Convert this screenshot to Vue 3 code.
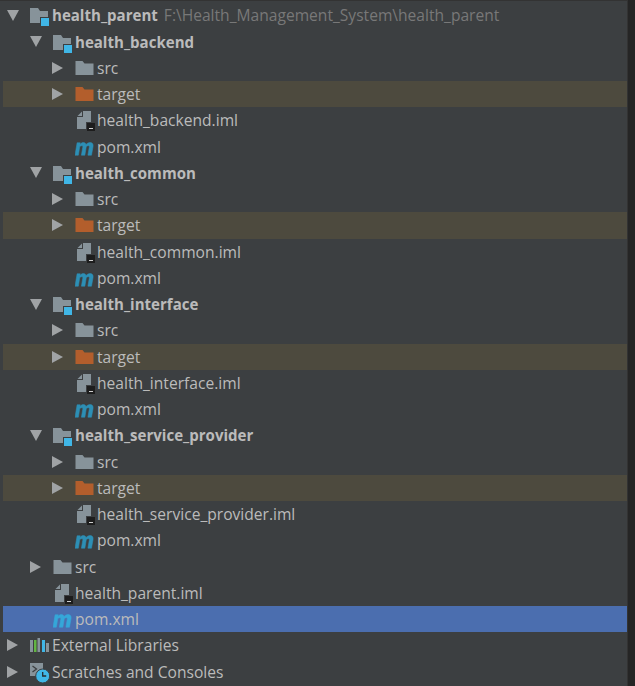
<script setup>
const modules = ['health_backend', 'health_common', 'health_interface', 'health_service_provider']

const rows = [
  { id: 'parent', depth: 0, arrow: 'down', icon: 'module', name: 'health_parent', bold: true, path: 'F:\\Health_Management_System\\health_parent' },
]
for (const m of modules) {
  rows.push({ id: m, depth: 1, arrow: 'down', icon: 'module', name: m, bold: true })
  rows.push({ id: m + '-src', depth: 2, arrow: 'right', icon: 'folder', name: 'src' })
  rows.push({ id: m + '-target', depth: 2, arrow: 'right', icon: 'excluded', name: 'target', excluded: true })
  rows.push({ id: m + '-iml', depth: 2, icon: 'iml', name: m + '.iml' })
  rows.push({ id: m + '-pom', depth: 2, icon: 'maven', name: 'pom.xml' })
}
rows.push({ id: 'src', depth: 1, arrow: 'right', icon: 'folder', name: 'src' })
rows.push({ id: 'iml', depth: 1, icon: 'iml', name: 'health_parent.iml' })
rows.push({ id: 'pom', depth: 1, icon: 'maven', name: 'pom.xml', selected: true })
rows.push({ id: 'libs', depth: 0, arrow: 'right', icon: 'libs', name: 'External Libraries' })
rows.push({ id: 'scratch', depth: 0, arrow: 'right', icon: 'scratch', name: 'Scratches and Consoles' })
</script>

<template>
  <div class="panel">
    <div class="tree">
      <div
        v-for="r in rows"
        :key="r.id"
        class="row"
        :class="[`depth-${r.depth}`, { excluded: r.excluded, selected: r.selected }]"
      >
        <span class="arrow">
          <svg v-if="r.arrow === 'down'" width="12" height="11" viewBox="0 0 12 11"><polygon points="0,0 12,0 6,11" fill="#a0a3a5" /></svg>
          <svg v-else-if="r.arrow === 'right'" width="11" height="12" viewBox="0 0 11 12"><polygon points="0,0 11,6 0,12" fill="#a0a3a5" /></svg>
        </span>
        <span class="icon">
          <svg v-if="r.icon === 'module'" width="20" height="22" viewBox="0 0 20 22">
            <path d="M0 4h8l2 3h8v12H0z" fill="#87939a" />
            <rect x="10" y="13" width="10" height="9" fill="#3c3f41" />
            <rect x="11" y="14" width="8" height="8" fill="#40b6e6" />
          </svg>
          <svg v-else-if="r.icon === 'folder'" width="20" height="20" viewBox="0 0 20 20">
            <path d="M0.500 3h7l2 2.500h9V17H0.500z" fill="#87939a" />
          </svg>
          <svg v-else-if="r.icon === 'excluded'" width="20" height="20" viewBox="0 0 20 20">
            <path d="M0.500 3h7l2 2.500h9V17H0.500z" fill="#b35e2c" />
          </svg>
          <svg v-else-if="r.icon === 'iml'" width="22" height="24" viewBox="0 0 22 24">
            <path d="M8 3h8v18H2V9h6z" fill="#87939a" />
            <path d="M7 3.500V8H2.500z" fill="#87939a" />
            <rect x="11" y="14" width="10" height="10" fill="#3c3f41" />
            <rect x="12" y="15" width="8" height="8" fill="#1d1d1d" />
            <rect x="14" y="20" width="4" height="1" fill="#cfcfcf" />
          </svg>
          <svg v-else-if="r.icon === 'maven'" width="20" height="20" viewBox="0 0 20 20">
            <path transform="translate(0 -1) scale(1.05 1.13)" d="M0 17L2 6h3l-.3 1.500C5.700 6.300 7 5.800 8 5.800c1.300 0 2.200.6 2.500 1.800C11.600 6.400 13 5.800 14.300 5.800c2.200 0 3.300 1.400 2.900 3.500L15.700 17h-3.400l1.300-7c.2-1-.2-1.400-1-1.400-.7 0-1.400.4-1.900 1L9.400 17H6.100l1.300-7c.2-1-.2-1.400-1-1.400-.7 0-1.400.4-1.900 1L3.200 17z" :fill="r.selected ? '#35a7d9' : '#2d8fb5'" :stroke="r.selected ? '#35a7d9' : '#2d8fb5'" stroke-width="0.500" />
          </svg>
          <svg v-else-if="r.icon === 'libs'" width="20" height="20" viewBox="0 0 20 20">
            <rect x="0" y="5" width="3" height="12" fill="#87939a" />
            <rect x="4" y="5" width="2.500" height="12" fill="#62b543" />
            <rect x="7.500" y="3" width="2.500" height="14" fill="#87939a" />
            <rect x="12" y="5" width="3" height="12" fill="#40b6e6" />
            <rect x="16" y="8" width="3" height="9" fill="#87939a" />
          </svg>
          <svg v-else-if="r.icon === 'scratch'" width="22" height="26" viewBox="0 0 22 26">
            <rect x="0" y="4" width="13" height="13" fill="#87939a" />
            <path d="M2.500 7l4 3-4 3" fill="none" stroke="#3c3f41" stroke-width="1.300" />
            <circle cx="12.700" cy="17" r="7" fill="#40b6e6" stroke="#3c3f41" />
            <path d="M12.700 13v4h3.500" fill="none" stroke="#26292b" stroke-width="1.300" />
          </svg>
        </span>
        <span class="name" :class="{ bold: r.bold }">{{ r.name }}</span>
        <span v-if="r.path" class="path">{{ r.path }}</span>
      </div>
    </div>
  </div>
</template>

<style>
html, body { background: #252525; }
</style>

<style scoped>
.panel {
  width: 635px;
  height: 686px;
  overflow: hidden;
  background: #252525;
  box-sizing: border-box;
}
.tree {
  height: 100%;
  box-sizing: border-box;
  width: 628px;
  padding: 1.25px 0 0 3px;
  background: #3c3f41;
  border-top: 1px solid #333333;
  border-right: 1px solid #333333;
}
.row {
  display: flex;
  align-items: center;
  height: 26.25px;
  font-family: "Open Sans", "Noto Sans", sans-serif;
  font-size: 15.6px;
  color: #bbbbbb;
  white-space: nowrap;
}
.row.excluded { background: #4d4a3e; }
.row.selected { background: #4b6eaf; }
.arrow { width: 27px; padding-left: 4px; box-sizing: border-box; display: flex; flex: none; }
.icon { width: 22px; height: 20px; display: flex; flex: none; align-items: center; }
.depth-1 { padding-left: 22.5px; }
.depth-1 .icon { width: 22.5px; }
.depth-2 { padding-left: 45px; }
.bold { font-weight: 700; font-size: 15.05px; }
.path { margin-left: 6px; color: #787878; }
</style>
